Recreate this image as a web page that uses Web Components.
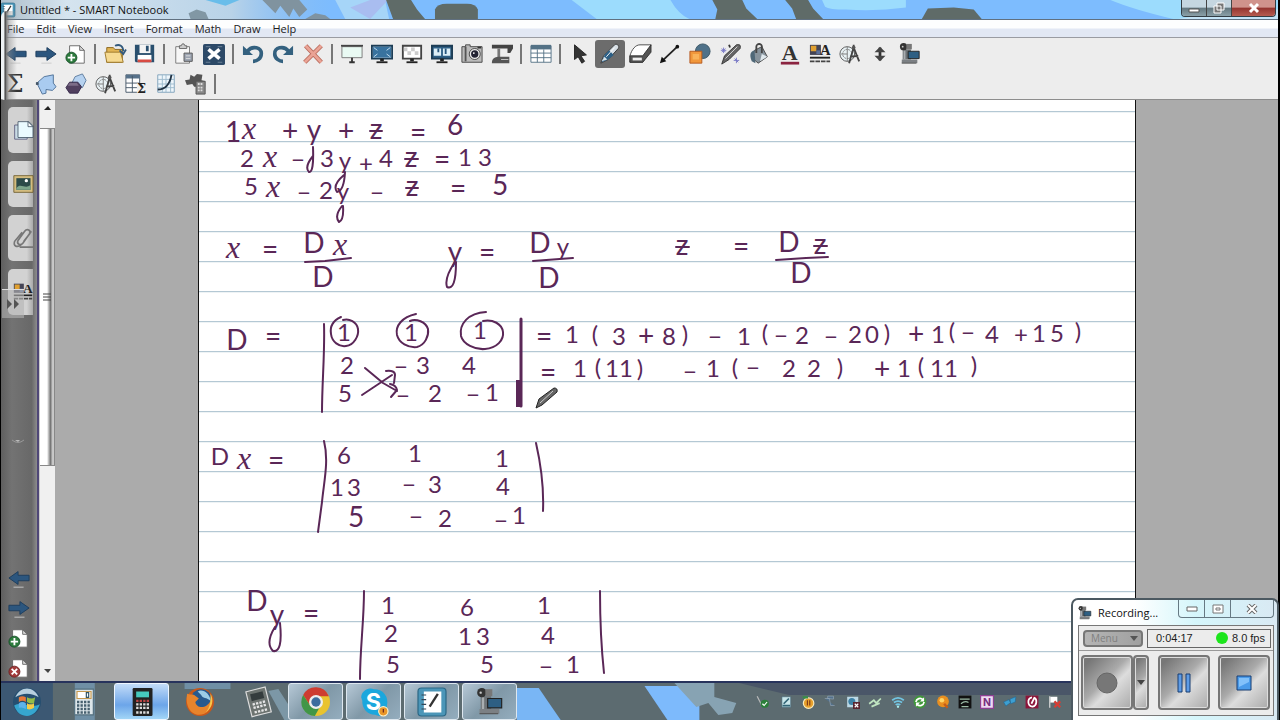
<!DOCTYPE html>
<html lang="en">
<head>
<meta charset="utf-8">
<title>Untitled * - SMART Notebook</title>
<style>
    html, body {
        margin: 0;
        height: 100%;
        overflow: hidden;
        background: #000;
        font-family: "Open Sans", "Noto Sans", sans-serif;
        font-size: 11px;
        color: #1c1c1c;
    }
</style>
</head>
<body>
<notebook-app></notebook-app>

<script>
// every icon is drawn on a 24 x 24 grid
const SHEET = '<path d="M5 3h11l5 5v14H5z" fill="#fff" stroke="#666"/><path d="M16 3v5h5z" fill="#ddd" stroke="#666"/>';
const MONITOR = '<path d="M10 17h4v3h-4z" fill="#222"/><path d="M6 21h12" stroke="#222" stroke-width="2"/>';
const RECORDER = '<path d="M4 7h9v11H4z" fill="#6d7276"/><path d="M6 8v10" stroke="#a9adb0" stroke-width="2"/><path d="M3 18h17v4H3z" fill="#7c8084"/><path d="M3 22h16" stroke="#555"/><circle cx="5" cy="4" r="4" fill="#333"/><circle cx="4" cy="4" r="1" fill="#ccc"/><path d="M8 1h6v6H8z" fill="#777"/><path d="M10 9h12v8H10z" fill="#2e5f83" stroke="#222"/>';
const COMPASS = '<circle cx="9" cy="12" r="8" fill="#e9f2f5" stroke="#555"/><circle cx="9" cy="12" r="5" fill="none" stroke="#777" stroke-dasharray="2 1"/><path d="M9 4v16M9 12H2" stroke="#777"/><path d="M16 2v3M16 5l-5 17M16 5l6 15M12 15l9-1" fill="none" stroke="#444" stroke-width="2"/><circle cx="16" cy="5" r="2" fill="#555"/>';
const GALLERY = '<path d="M1 2h12v11H1z" fill="#445"/><path d="M2 3h6v6H2z" fill="#e0a030"/><path d="M8 8h4v4H8z" fill="#5b6f9a"/><text x="12" y="13" font-family="Liberation Serif" font-weight="bold" font-size="16" fill="#222">A</text><path d="M1 16h22" stroke="#222" stroke-width="2"/><path d="M1 20h22" stroke="#444" stroke-width="2" stroke-dasharray="5 1"/>';
const CALC = '<path d="M4 1h16v22H4z" fill="#dde6ea" stroke="#54707f"/><path d="M6 3h12v6H6z" fill="#fff" stroke="#c79a50"/><path d="M14 4h2v4h-2z" fill="none" stroke="#356"/><path d="M6 12h12M6 15h12M6 18h12M6 21h12" stroke="#47606f" stroke-width="2" stroke-dasharray="2 1"/>';

const ICONS = {
    back: '<path d="M23 9H11V5L1 12l10 7v-4h12z" fill="#2c567e" stroke="#1c3c5c"/><path d="M6 22h11" stroke="#ccc"/>',
    forward: '<path d="M1 9h12V5l10 7-10 7v-4H1z" fill="#2c567e" stroke="#1c3c5c"/><path d="M7 22h11" stroke="#ccc"/>',
    addPage: SHEET + '<circle cx="7" cy="16" r="6" fill="#2c7a3c" stroke="#17502a"/><path d="M7 12v8M3 16h8" stroke="#fff" stroke-width="2"/>',
    removePage: SHEET + '<circle cx="7" cy="16" r="6" fill="#a33b3b" stroke="#6c2020"/><path d="M4 13l6 6M10 13l-6 6" stroke="#fff" stroke-width="2"/>',
    open: '<path d="M3 5h7l2 2h8v14H3z" fill="#e2b553" stroke="#886318"/><path d="M1 10h17l3 11H3z" fill="#f6da91" stroke="#9c782b"/><path d="M12 3c5-2 9 0 9 6M17 8l4 4 3-5" fill="none" stroke="#335a7d" stroke-width="2"/>',
    save: '<path d="M1 2h21v19H2l-1-1z" fill="#294f6e"/><path d="M6 2h12v9H6z" fill="#f4f4f4"/><path d="M13 3h3v6h-3z" fill="#294f6e"/><path d="M4 13h15v7H4z" fill="#fff"/><path d="M4 18h15v3H4z" fill="#d84b43"/>',
    paste: '<path d="M3 4h15v18H3z" fill="#f7f7f7" stroke="#777"/><path d="M7 6V3h2l1-2h2l1 2h2v3z" fill="#ccc" stroke="#666"/><path d="M12 11h9v9h-9z" fill="#9ba3b0" stroke="#555"/><path d="M14 14h5M14 17h5" stroke="#ddd"/>',
    capture: '<rect x="0" y="1" width="24" height="23" rx="2" fill="#2d4a68"/><path d="M6 7l12 10M18 7L6 17" stroke="#fff" stroke-width="4"/><path d="M3 4h5M16 4h5M3 21h5M16 21h5" stroke="#71879b"/>',
    undo: '<path d="M6 9c5-7 16-4 15 3 0 5-5 8-9 8" fill="none" stroke="#34617f" stroke-width="4"/><path d="M1 3v10h11z" fill="#34617f"/>',
    redo: '<path d="M18 9C13 2 2 5 3 12c0 5 5 8 9 8" fill="none" stroke="#34617f" stroke-width="4"/><path d="M23 3v10H12z" fill="#34617f"/>',
    remove: '<path d="M4 3l17 18M21 3L3 21" stroke="#b96b5c" stroke-width="5"/><path d="M4 3l17 18M21 3L3 21" stroke="#eaa395" stroke-width="3"/>',
    shade: '<path d="M1 4h22v12H1z" fill="#e9faf3" stroke="#777"/><path d="M0 3h24" stroke="#444" stroke-width="2"/><path d="M12 16v5M9 21h6" stroke="#333" stroke-width="2"/>',
    fullScreen: '<path d="M1 3h22v14H1z" fill="#fff" stroke="#1d3d55" stroke-width="2"/><path d="M2 4h20v12H2z" fill="#39739f"/><path d="M3 5l4 3M21 5l-4 3M3 15l4-3M21 15l-4-3" stroke="#cde5f5"/>' + MONITOR,
    transparent: '<path d="M2 3h20v14H2z" fill="#fff" stroke="#444" stroke-width="2"/><path d="M3 5h4v4h4V5h4v4h4v4h-4v-4h-4v4H7V9H3z" fill="#ccc"/>' + MONITOR,
    dual: '<path d="M1 3h22v14H1z" fill="#2d5e84" stroke="#1d3d55" stroke-width="2"/><path d="M3 6h8v8H3zM13 6h8v8h-8z" fill="#dceff8"/><path d="M8 6v4M16 6v6" stroke="#25557c" stroke-width="2"/>' + MONITOR,
    camera: '<path d="M1 4h4V2h5v2h13v17H1z" fill="#bbb" stroke="#444"/><path d="M5 4v16" stroke="#555" stroke-width="2"/><circle cx="15" cy="12" r="6" fill="#eee" stroke="#444"/><circle cx="15" cy="12" r="4" fill="#223"/><circle cx="14" cy="11" r="1" fill="#fff"/><path d="M18 5h4" stroke="#333" stroke-width="2"/>',
    docCamera: '<path d="M1 2h23v4l-3 5h-3V6H1z" fill="#444"/><path d="M7 6h3v11H7z" fill="#777"/><path d="M1 21c0-5 5-6 8-6h11v7H1z" fill="#555"/><path d="M11 18h8" stroke="#ccc"/>',
    table: '<path d="M1 3h22v18H1z" fill="#fff" stroke="#547286"/><path d="M1 2h22v5H1z" fill="#547286"/><path d="M1 11h22M1 16h22M8 7v14M15 7v14" stroke="#547286"/>',
    select: '<path d="M6 2v16l4-3 4 7 3-2-4-6 6-1z" fill="#333" stroke="#222"/>',
    pen: '<path d="M2 22l3-8L17 2c2-2 6 1 4 4L10 18z" fill="#d7dfe5" stroke="#333"/><path d="M3 21l3-8 5-5 5 5-6 5z" fill="#2c5f85"/><path d="M3 20l3-5 3 3z" fill="#d5e2e8"/><path d="M8 15l9-10" stroke="#fff"/>',
    eraser: '<path d="M1 14C3 7 7 2 12 2h12l-3 9-6 10H1z" fill="#fff" stroke="#444"/><path d="M24 2l-9 12H1v7h14l9-11z" fill="#555" stroke="#333"/><path d="M4 16h10v3H4z" fill="#eee"/>',
    line: '<path d="M3 20L20 4" stroke="#222" stroke-width="2"/><circle cx="20" cy="4" r="2" fill="#111"/><path d="M1 22l2-7 5 5z" fill="#111"/>',
    shapes: '<circle cx="15" cy="9" r="8" fill="#4e7189" stroke="#395565"/><path d="M1 9h13v13H1z" fill="#f1973b" stroke="#b3561d"/><path d="M4 12h7v6H4z" fill="#f9b25a"/>',
    magicPen: '<path d="M3 23l3-9L19 2c4-1 5 1 4 4L11 18z" fill="#666" stroke="#333"/><path d="M7 17L20 4" stroke="#ddd"/><path d="M5 5v6M2 8h6M3 6l4 4M7 6l-4 4M19 16v6M16 19h6M17 17l4 4" stroke="#7575c5"/><path d="M11 2l1 3" stroke="#333" stroke-width="2"/>',
    fill: '<path d="M6 8l8-4 6 11-10 7-7-6z" fill="#87939c" stroke="#444"/><path d="M8 11V4c0-4 7-4 6 1v6" fill="none" stroke="#444" stroke-width="2"/><path d="M6 8c-6 2-5 7-3 12l4 2z" fill="#4f6878"/><path d="M14 12l6 3-8 5z" fill="#dfe8ed"/>',
    text: '<text x="3" y="18" font-family="Liberation Serif" font-weight="bold" font-size="24" fill="#333">A</text><path d="M2 22h20" stroke="#8b2440" stroke-width="3"/>',
    gallery: GALLERY,
    compass: COMPASS,
    move: '<path d="M12 5v14" stroke="#333" stroke-width="3"/><path d="M6 10l6-6 6 6zM6 14l6 6 6-6z" fill="#444"/>',
    recorder: RECORDER,
    sum: '<text x="2" y="21" font-family="DejaVu Serif" font-size="26" fill="#333">Σ</text>',
    polygon: '<path d="M2 11l8-7 10-2v9l3 4-4 4-7-1v4l-4 1z" fill="#a9cbf0" stroke="#4c6f96"/><path d="M1 10h3v3H1z" fill="#456"/>',
    hexagon: '<path d="M11 4l8-3 4 7-4 8h-8l-3-6z" fill="#b6d2f0" stroke="#5b7a9c"/><path d="M5 10h9l4 5-4 7H5l-4-6z" fill="#51405f" stroke="#35294a"/><path d="M5 11h8l2 3H3z" fill="#7d6d88"/>',
    tableSum: '<path d="M1 2h15v19H1z" fill="#fff" stroke="#456"/><path d="M1 2h15v4H1z" fill="#56718a"/><path d="M1 11h15M1 16h15M8 3v18" stroke="#456"/><path d="M13 11h11v12H13z" fill="#eee"/><text x="13" y="22" font-family="DejaVu Serif" font-weight="bold" font-size="14" fill="#222">Σ</text>',
    graph: '<path d="M3 2h18v19H3z" fill="#eef6fb" stroke="#7ea1ba"/><path d="M8 2v19M12 2v19M17 2v19M3 7h18M3 12h18M3 16h18" stroke="#9dbacd"/><path d="M3 18c8 0 13-5 15-16" fill="none" stroke="#234" stroke-width="2"/>',
    puzzle: '<path d="M0 8l5-1 1-5 4 2 3-3 6 1-1 6 4 1v6H10l-2-3-6 1z" fill="#555"/><path d="M12 9h10v14H12z" fill="#888" stroke="#555"/><path d="M14 12h6M14 16h6M14 19h6" stroke="#ddd" stroke-width="2" stroke-dasharray="2 1"/>',
    pages: '<path d="M2 6h15v17H2z" fill="#c9dbe5" stroke="#557"/><path d="M6 2h13l5 5v14H6z" fill="#eafaff" stroke="#456"/><path d="M18 2v6h6z" fill="#fff" stroke="#456"/>',
    picture: '<path d="M1 2h23v20H1z" fill="#d4bd80" stroke="#6c5a2a"/><path d="M4 5h17v14H4z" fill="#2c4a49"/><path d="M4 17c5-7 11 2 17-4v6H4z" fill="#7da58b"/><circle cx="16" cy="8" r="2" fill="#fff"/>',
    clip: '<path d="M22 4L12 18c-3 4-8 1-6-3l8-11c3-4 8-1 6 3l-7 9M11 5L2 16c-2 6 3 8 8 4M8 23h16" fill="none" stroke="#777" stroke-width="2"/>',
    orb: '<circle cx="12" cy="12" r="12" fill="#264f70"/><path d="M1 15c7-4 14 3 22-1-2 6-6 10-11 10S3 21 1 15z" fill="#36a6cf"/><path d="M2 8C6-2 18-2 22 8 16 4 8 4 2 8z" fill="#b8d0df"/><path d="M5 8q3-2 6 0v4q-3-2-6 0z" fill="#e97838"/><path d="M12 8q4 2 7 0l-1 5q-3 1-6-1z" fill="#94bd48"/><path d="M5 13q3-2 6 0v5q-3-2-6-1z" fill="#5eb3ea"/><path d="M12 13q3 2 6 0v4q-3 2-6 1z" fill="#f5cd47"/>',
    calc: CALC,
    calcDark: '<rect x="4" y="0" width="17" height="24" rx="1" fill="#222"/><path d="M7 3h11v5H7z" fill="#46c9bd"/><path d="M7 11h12" stroke="#b44" stroke-width="2" stroke-dasharray="2 1"/><path d="M7 14h12M7 17h12M7 21h12" stroke="#ddd" stroke-width="2" stroke-dasharray="2 1"/>',
    calcTilt: '<g transform="rotate(-14 12 12)"><path d="M4 1h17v22H4z" fill="#6c7370" stroke="#ddd"/><path d="M7 4h11v6H7z" fill="#343c3d"/><path d="M7 13h12M7 16h12M7 20h12" stroke="#e5e5e5" stroke-width="2" stroke-dasharray="2 1"/></g>',
    firefox: '<circle cx="12" cy="12" r="12" fill="#c9581a"/><circle cx="13" cy="10" r="9" fill="#28598e"/><path d="M10 3c4-3 11 2 11 8-3-3-7-2-8-5z" fill="#9ccbe6"/><path d="M1 5c2 1 4 0 6 1l4 3-3 3c1 6 10 6 13-1 1 7-3 12-10 12S-1 15 1 5z" fill="#e8842c"/><path d="M21 5c3 5 2 12-4 16 4-5 4-9 4-16z" fill="#f8c64a"/>',
    chrome: '<circle cx="12" cy="12" r="12" fill="#e9c32f"/><path d="M1 6a12 12 0 0 1 22 1H12l-5 8z" fill="#ce3c31"/><path d="M1 6a12 12 0 0 0 10 18l5-9-9 0z" fill="#419647"/><circle cx="12" cy="12" r="6" fill="#eee"/><circle cx="12" cy="12" r="4" fill="#3c6c9e"/>',
    skype: '<path d="M1 8a8 8 0 0 1 11-7 11 11 0 0 1 11 14 7 7 0 0 1-10 8A11 11 0 0 1 2 11z" fill="#1ba7dd"/><text x="5" y="19" font-family="Inter" font-weight="bold" font-size="20" fill="#fff">S</text><circle cx="20" cy="20" r="4" fill="#e99628" stroke="#fff3c9"/><path d="M20 18v3" stroke="#622"/>',
    notebook: '<rect x="0" y="0" width="24" height="24" rx="3" fill="#4b96b8" stroke="#2a6684"/><path d="M5 3h15v18H5z" fill="#fff"/><path d="M3 6h4M3 10h4M3 14h4M3 18h4" stroke="#345"/><path d="M10 16l7-11" stroke="#333" stroke-width="2"/>',
    trayCheck: '<path d="M2 2l8 16" stroke="#bbb" stroke-width="2"/><circle cx="15" cy="15" r="7" fill="#2b7f39"/><path d="M11 15l3 3 5-6" fill="none" stroke="#fff" stroke-width="2"/>',
    trayNote: '<path d="M5 3h15v18H5z" fill="#c9e6ea" stroke="#467"/><path d="M8 15l9-9M6 18h13" stroke="#367" stroke-width="3"/>',
    trayWarn: '<circle cx="13" cy="14" r="9" fill="#e8a12b" stroke="#faecc0" stroke-width="2"/><path d="M11 9v9M15 9v9" stroke="#823a15" stroke-width="2"/><path d="M3 4h9" stroke="#399046" stroke-width="4"/>',
    traySync: '<path d="M3 6h8l2 12h7M8 6V2h10v5z" fill="#54728c" stroke="#9ab"/>',
    trayError: '<path d="M2 3h19v18H2z" fill="#bcd9e6"/><circle cx="10" cy="11" r="6" fill="#3e82a6"/><path d="M12 12h12v12H12z" fill="#5b2630"/><path d="M15 15l6 6M21 15l-6 6" stroke="#fff" stroke-width="2"/>',
    trayPen: '<path d="M2 15l8-6 4 5 8-8M6 20l14-6" fill="none" stroke="#bfe4c0" stroke-width="3"/>',
    trayWifi: '<path d="M2 9q10-8 20 0M5 13q7-5 14 0M8 17q4-3 8 0" fill="none" stroke="#72c4e2" stroke-width="3"/><circle cx="12" cy="20" r="2" fill="#aee"/>',
    trayRefresh: '<circle cx="12" cy="12" r="11" fill="#40983a"/><path d="M5 12a7 7 0 0 1 12-4M19 12a7 7 0 0 1-12 4" fill="none" stroke="#fff" stroke-width="3"/><path d="M19 4v7h-7zM5 20v-7h7z" fill="#fff"/>',
    trayGold: '<circle cx="12" cy="11" r="10" fill="#e88f20"/><circle cx="10" cy="9" r="4" fill="#ffd565"/><path d="M14 15l6 7" stroke="#c75c16" stroke-width="4"/>',
    trayDark: '<path d="M1 1h22v22H1z" fill="#111"/><path d="M3 7h17M5 15q7-6 13-2M6 20h12" fill="none" stroke="#9cbba6" stroke-width="2"/>',
    trayOneNote: '<path d="M1 1h22v22H1z" fill="#efdaf2" stroke="#8e4094" stroke-width="2"/><text x="5" y="18" font-family="Inter" font-weight="bold" font-size="18" fill="#78307f">N</text>',
    trayCubes: '<path d="M1 12l9-4 3 5-8 6zM12 7l10-4-1 9-8 3z" fill="#3d9fd1" stroke="#216894"/>',
    trayRed: '<path d="M1 1h22v22H1z" fill="#8c153a"/><path d="M12 4c-9 2-8 15 1 16 8-2 8-13 3-15l-5 10" fill="none" stroke="#fff" stroke-width="3"/>',
    trayFlag: '<path d="M3 2v20" stroke="#ddd" stroke-width="2"/><path d="M4 3h12v10H4z" fill="#fff"/><path d="M11 11l10 10M21 11L11 21" stroke="#d63e35" stroke-width="4"/>'
};

class NbIcon extends HTMLElement {
    constructor() {
        super();
        this.attachShadow({ mode: 'open' });
    }

    connectedCallback() {
        this.shadowRoot.innerHTML = `
        <style>
            :host { display: block; width: 24px; height: 24px; flex: none; }
            svg { display: block; width: 100%; height: 100%; overflow: visible; }
        </style>
        <svg viewBox="0 0 24 24" fill="none" aria-hidden="true">${ICONS[this.getAttribute('name')] || ''}</svg>
        `;
    }
}
customElements.define('nb-icon', NbIcon);

class WindowTitle extends HTMLElement {
    constructor() {
        super();
        this.attachShadow({ mode: 'open' });
        this.shadowRoot.innerHTML = `
        <style>
            :host {
                display: flex;
                align-items: center;
                position: relative;
                height: 20px;
                overflow: hidden;
                background: #7dbcfe;
                border-bottom: 1px solid #607080;
                box-sizing: border-box;
            }
            .wallpaper { position: absolute; inset: 0; width: 100%; height: 100%; }
            nb-icon { position: relative; width: 14px; height: 14px; }
            h1 { position: relative; flex: 1; margin: 0 0 0 5px; font-size: 11px; font-weight: normal; line-height: 20px; color: #111; }
            .controls {
                position: relative;
                display: flex;
                align-self: flex-start;
                height: 16px;
                margin-right: 2px;
                border: 1px solid #333d44;
                border-top: 0;
                border-radius: 0 0 4px 4px;
                overflow: hidden;
            }
            button {
                display: flex;
                align-items: center;
                justify-content: center;
                width: 25px;
                padding: 0;
                border: 0;
                border-right: 1px solid #444;
                background: linear-gradient(#c5d6e0 45%, #63777f 50%, #8ba0a8);
            }
            button.close { width: 43px; border: 0; background: linear-gradient(#d0938c 45%, #94342f 50%, #b65c50); }
            button svg { width: 12px; height: 12px; }
        </style>
        <svg class="wallpaper" viewBox="0 0 1280 20" preserveAspectRatio="none" aria-hidden="true">
            <defs><linearGradient id="glass">
                <stop offset="0" stop-color="#aebfcb"/><stop offset=".2" stop-color="#d5e4ef"/>
                <stop offset=".7" stop-color="#b9d3e8"/><stop offset="1" stop-color="#8ebde9" stop-opacity="0"/>
            </linearGradient></defs>
            <path d="M0 0h330v20H0z" fill="url(#glass)"/>
            <path d="M188 14l8-4 9 3 3 7h-18z" fill="#8197a4"/>
            <path d="M205 0l20 6 14-6z" fill="#69bdea"/>
            <path d="M262 0h37l8 10-8 8-6-9-4 9-9-12-5 8z" fill="#80939f"/>
            <path d="M305 20l10-6 10 2 5 4z" fill="#7f93a1"/>
            <path d="M335 0h50l4 20h-44z" fill="#a6d5f8"/>
            <path d="M350 8l20-8h18l-18 20z" fill="#a9bdf0"/>
            <path d="M386 0h25l6 10 8 10h-32z" fill="#5f6b68"/>
            <path d="M435 20v-10q2-6 12-6h20q9 0 11 6v10z" fill="#5f6b68"/>
            <path d="M572 0h99q8 15 19 20H597z" fill="#9cdcfd"/>
            <path d="M713 0h30l4 9 11 11h-42l2-10z" fill="#5f6b68"/>
            <path d="M786 0h23l5 9 10 11h-27l-4-11z" fill="#5f6b68"/>
            <path d="M823 0h84v8q-30 4-60 2-17 0-21-3z" fill="#9cdcfd"/>
            <path d="M923 20l6-11 26-1 20 2 8 10z" fill="#5f6b68"/>
            <path d="M1112 0h168v20h-105q-40-10-63-20z" fill="#9cdcfd"/>
            <path d="M1180 20q50-10 100-10v10z" fill="#c4e4f7"/>
        </svg>
        <nb-icon name="notebook"></nb-icon>
        <h1><slot></slot></h1>
        <div class="controls">
            <button aria-label="Minimize"><svg viewBox="0 0 12 12"><path d="M1 7h10v3H1z" fill="#fff" stroke="#555"/></svg></button>
            <button aria-label="Restore"><svg viewBox="0 0 12 12"><path d="M4 1h7v7H4zM1 4h7v7H1z" fill="#777" stroke="#fff"/></svg></button>
            <button class="close" aria-label="Close"><svg viewBox="0 0 12 12"><path d="M2 2l8 8M10 2l-8 8" stroke="#fff" stroke-width="3"/></svg></button>
        </div>
        `;
    }
}
customElements.define('window-title', WindowTitle);

class MenuBar extends HTMLElement {
    constructor() {
        super();
        this.attachShadow({ mode: 'open' });
        this.shadowRoot.innerHTML = `
        <style>
            :host {
                display: block;
                height: 18px;
                background: linear-gradient(#fdfefe 8px, #e2e8f4 9px);
                border-bottom: 1px solid #9a9ca2;
                box-sizing: border-box;
            }
            nav { display: flex; gap: 12px; padding-left: 6px; }
            button { padding: 0; border: 0; background: none; font: inherit; line-height: 18px; color: #1c1c1c; }
        </style>
        <nav></nav>
        `;
    }

    connectedCallback() {
        const items = this.getAttribute('items').split(',');
        this.shadowRoot.querySelector('nav').innerHTML = items.map((item) => `<button>${item}</button>`).join('');
    }
}
customElements.define('menu-bar', MenuBar);

// tools is a list of icon names, "|" stands for a separator
class ToolRow extends HTMLElement {
    constructor() {
        super();
        this.attachShadow({ mode: 'open' });
        this.shadowRoot.innerHTML = `
        <style>
            :host { display: block; }
            div { display: flex; align-items: center; height: 30px; }
            button { display: flex; align-items: center; justify-content: center; width: 30px; height: 28px; padding: 0; border: 0; border-radius: 3px; background: none; }
            button[aria-pressed=true] { background: #6c6c6c; }
            nb-icon { width: 22px; height: 22px; }
            i { width: 2px; height: 20px; margin: 0 4px 0 3px; background: #777; }
        </style>
        <div role="toolbar"></div>
        `;
    }

    connectedCallback() {
        const active = this.getAttribute('active');
        this.shadowRoot.querySelector('div').innerHTML = this.getAttribute('tools').split(' ').map((tool) => {
            if (tool === '|') {
                return '<i></i>';
            }
            return `<button aria-label="${tool}" aria-pressed="${tool === active}"><nb-icon name="${tool}"></nb-icon></button>`;
        }).join('');
    }
}
customElements.define('tool-row', ToolRow);

class SideTabs extends HTMLElement {
    constructor() {
        super();
        this.attachShadow({ mode: 'open' });
        this.shadowRoot.innerHTML = `
        <style>
            :host {
                display: flex;
                flex-direction: column;
                position: relative;
                width: 38px;
                box-sizing: border-box;
                padding: 7px 0 0 7px;
                background: linear-gradient(90deg, #5f5f5f, #737373 30%, #686868 85%, #8c8c8c);
                border-right: 2px solid #4f4777;
            }
            .tabs { display: grid; gap: 8px; }
            button { display: flex; align-items: center; padding: 0; border: 0; background: none; }
            .tabs button { width: 25px; height: 46px; padding-left: 5px; background: linear-gradient(90deg, #d2d2d2 75%, #aaa); border-radius: 5px 0 0 5px; }
            .tabs nb-icon { width: 20px; height: 20px; }
            .grip { display: block; width: 14px; height: 5px; margin: 124px 0 auto 3px; }
            .pager { display: grid; gap: 8px; padding-bottom: 2px; }
            .pager nb-icon { width: 22px; height: 22px; }
            .expand {
                position: absolute;
                left: 1px;
                top: 189px;
                width: 22px;
                height: 29px;
                padding-left: 4px;
                border-top: 1px solid #ddd;
                background: rgba(180, 180, 180, .6);
            }
        </style>
        <div class="tabs">
            <button aria-label="Page Sorter"><nb-icon name="pages"></nb-icon></button>
            <button aria-label="Gallery"><nb-icon name="picture"></nb-icon></button>
            <button aria-label="Attachments"><nb-icon name="clip"></nb-icon></button>
            <button aria-label="Properties"><nb-icon name="gallery"></nb-icon></button>
        </div>
        <button class="expand" aria-label="Expand"><svg width="14" height="12"><path d="M1 1l5 5-5 5zM8 1l5 5-5 5z" fill="#555"/></svg></button>
        <svg class="grip" viewBox="0 0 14 5"><path d="M1 1q6 5 12 0" fill="none" stroke="#999"/><path d="M4 1h5L7 3z" fill="#bbb"/></svg>
        <div class="pager">
            <button aria-label="Previous page"><nb-icon name="back"></nb-icon></button>
            <button aria-label="Next page"><nb-icon name="forward"></nb-icon></button>
            <button aria-label="Add page"><nb-icon name="addPage"></nb-icon></button>
            <button aria-label="Delete page"><nb-icon name="removePage"></nb-icon></button>
        </div>
        `;
    }
}
customElements.define('side-tabs', SideTabs);

class PageScroll extends HTMLElement {
    constructor() {
        super();
        this.attachShadow({ mode: 'open' });
        this.shadowRoot.innerHTML = `
        <style>
            :host { display: flex; flex-direction: column; width: 16px; background: #f0f0f0; border-left: 1px solid #ccc; box-sizing: border-box; }
            .cap { height: 28px; flex: none; display: flex; justify-content: center; padding-top: 6px; box-sizing: border-box; }
            .cap.end { height: 16px; padding-top: 4px; }
            .track { flex: 1; }
            .thumb {
                display: flex;
                align-items: center;
                height: 63%;
                box-sizing: border-box;
                padding-left: 3px;
                border: 1px solid #888;
                border-left: 0;
                background: linear-gradient(90deg, #fff 50%, #aaa 65%, #777 75%, #c9c9c9 90%);
            }
        </style>
        <div class="cap"><svg width="7" height="5"><path d="M0 4h7L4 0z" fill="#222"/></svg></div>
        <div class="track"><div class="thumb"><svg width="8" height="8"><path d="M0 1h8M0 4h8M0 7h8" stroke="#444"/></svg></div></div>
        <div class="cap end"><svg width="7" height="5"><path d="M0 0h7L4 4z" fill="#444"/></svg></div>
        `;
    }
}
customElements.define('page-scroll', PageScroll);

// Each line of ink is a list of [text, centre x, baseline y, style].
// Styles: v = italic variable, w = the larger letters.
const INK = [
    [['1', 34, 42, 'w'], ['x', 50, 39, 'v'], ['+', 91, 41, 'w'], ['y', 115, 40, 'w'], ['+', 147, 41, 'w'], ['z', 177, 39, 'w'], ['=', 219, 42, 'w'], ['6', 256, 35, 'w']],
    [['2', 48, 67], ['x', 71, 67, 'v'], ['−', 99, 68], ['3', 128, 67], ['y', 146, 69], ['+', 167, 72], ['4', 187, 67], ['z', 212, 67, 'w'], ['=', 243, 69, 'w'], ['1', 266, 66], ['3', 286, 66]],
    [['5', 52, 95], ['x', 74, 97, 'v'], ['−', 105, 101], ['2', 127, 99], ['y', 144, 100], ['−', 178, 101], ['z', 213, 96, 'w'], ['=', 259, 98, 'w'], ['5', 301, 95, 'w']],
    [['x', 34, 158, 'v'], ['=', 71, 159, 'w'], ['D', 115, 153, 'w'], ['x', 141, 155, 'v']],
    [['D', 124, 187, 'w']],
    [['y', 256, 162, 'w'], ['=', 288, 162, 'w'], ['D', 341, 153, 'w'], ['y', 364, 155]],
    [['D', 350, 188, 'w']],
    [['z', 483, 155, 'w'], ['=', 542, 156, 'w'], ['D', 590, 152, 'w'], ['z', 621, 154, 'w']],
    [['D', 602, 183, 'w']],
    [['D', 38, 250, 'w'], ['=', 74, 246, 'w']],
    [['1', 145, 241], ['1', 212, 241], ['1', 281, 239]],
    [['2', 148, 274], ['−', 202, 275], ['3', 224, 274], ['4', 270, 274]],
    [['5', 146, 302], ['−', 204, 304], ['2', 236, 302], ['−', 274, 303], ['1', 293, 301]],
    [['=', 345, 246, 'w'], ['1', 373, 243], ['(', 396, 243], ['3', 420, 245], ['+', 447, 246, 'w'], ['8', 470, 245], [')', 486, 243], ['−', 516, 245], ['1', 545, 245], ['(', 566, 242], ['−', 582, 244], ['2', 603, 244], ['−', 632, 245], ['2', 656, 243], ['0', 673, 243], [')', 688, 242], ['+', 717, 244, 'w'], ['1', 739, 243], ['(', 753, 240], ['−', 769, 241], ['4', 793, 243], ['+', 822, 243], ['1', 840, 242], ['5', 858, 242], [')', 879, 240]],
    [['=', 349, 282, 'w'], ['1', 381, 277], ['(', 399, 276], ['1', 413, 277], ['1', 427, 277], [')', 441, 277], ['−', 491, 280], ['1', 514, 277], ['(', 536, 276], ['−', 554, 276], ['2', 590, 277], ['2', 615, 277], [')', 641, 276], ['+', 683, 279, 'w'], ['1', 705, 277], ['(', 722, 275], ['1', 738, 277], ['1', 752, 277], [')', 775, 274]],
    [['D', 21, 365], ['x', 45, 369, 'v'], ['=', 77, 370, 'w']],
    [['6', 145, 364], ['1', 216, 362], ['1', 303, 367]],
    [['1', 138, 396], ['3', 155, 396], ['−', 210, 393], ['3', 236, 393], ['4', 304, 395]],
    [['5', 157, 427, 'w'], ['−', 217, 425], ['2', 246, 427], ['−', 302, 429], ['1', 320, 424]],
    [['D', 58, 511, 'w'], ['y', 78, 525, 'w'], ['=', 112, 523, 'w']],
    [['1', 189, 514], ['6', 268, 516], ['1', 345, 514]],
    [['2', 192, 542], ['1', 266, 545], ['3', 284, 545], ['4', 349, 544]],
    [['5', 194, 573], ['5', 288, 573], ['−', 347, 575], ['1', 374, 573]]
];

class NotePage extends HTMLElement {
    constructor() {
        super();
        this.attachShadow({ mode: 'open' });
        const ink = INK.map((line) => '<text>' + line.map(([text, x, y, style]) =>
            `<tspan x="${x}" y="${y}" class="${style || 'n'}">${text}</tspan>`).join('') + '</text>').join('');
        this.shadowRoot.innerHTML = `
        <style>
            :host {
                display: block;
                box-sizing: border-box;
                overflow: hidden;
                border: solid #111;
                border-width: 0 1px;
                background: #fff repeating-linear-gradient(transparent 0 11px, #b4c8d4 11px 12px, #eef3f5 12px 13px, transparent 13px 30px);
            }
            svg { display: block; width: 100%; height: 100%; }
            text { font-family: Lato, "Open Sans", sans-serif; fill: #5a2757; text-anchor: middle; }
            .n { font-size: 24px; }
            .w { font-size: 28px; }
            .v { font-size: 32px; font-family: "Liberation Serif", serif; font-style: italic; }
            .strokes { fill: none; stroke: #5a2757; stroke-width: 2; stroke-linecap: round; stroke-linejoin: round; }
            .thick { stroke-width: 3; }
            .blot { stroke-width: 6; stroke-linecap: butt; }
        </style>
        <svg>
            ${ink}
            <g class="strokes">
                <path d="M106 162l20-1 26-3M334 161l40-3M577 160l30-2 22-1"/>
                <path d="M171 31h12M206 59h13M207 88h12M477 147h13M615 146h13"/>
                <path d="M114 47q1 26-4 25-5-5 4-16M145 75q-12 10-7 17 7-1 8-20M143 106q-8 10-3 16 5-2 4-16M256 162q-11 16-8 25 9 4 9-25M76 527q-10 16-2 24 10 2 7-28"/>
                <path d="M125 224c1 28-2 58-2 88M125 341c5 20 0 40-2 61l-4 30M337 343c5 22 8 44 7 68M165 491c0 30-4 58-4 88M401 491c0 28 1 54 4 82"/>
                <path d="M142 217c-9 4-11 11-10 17 1 8 8 13 15 12 8-1 13-10 12-17-1-7-9-11-15-9"/>
                <path d="M217 214c-14 3-21 12-19 21 2 8 11 13 20 12 8-2 12-11 11-18-2-7-12-11-18-8"/>
                <path d="M287 212c-18 1-27 12-25 24 2 8 14 14 24 13 12-1 19-9 18-17-1-8-10-13-20-11"/>
                <path d="M166 268l18 15 14 8M163 295l30-20M187 271q9-1 9 4l-1 8M191 284q6 1 7 6l-6 7"/>
                <path class="thick" d="M322 219v87"/>
                <path class="blot" d="M320 280v27"/>
            </g>
            <path d="M337 308l3-9 15-11q4 0 3 4l-15 13z" fill="#666" stroke="#222"/>
            <path d="M341 303l13-12" stroke="#ccc"/>
        </svg>
        `;
    }
}
customElements.define('note-page', NotePage);

class TaskBar extends HTMLElement {
    constructor() {
        super();
        this.attachShadow({ mode: 'open' });
        const tray = ['trayCheck', 'trayNote', 'trayWarn', 'traySync', 'trayError', 'trayPen', 'trayWifi', 'trayRefresh', 'trayGold', 'trayDark', 'trayOneNote', 'trayCubes', 'trayRed', 'trayFlag'];
        this.shadowRoot.innerHTML = `
        <style>
            :host {
                display: flex;
                justify-content: space-between;
                position: relative;
                height: 39px;
                box-sizing: border-box;
                border-top: 2px solid #27335c;
                background: #5c6b70;
            }
            .wallpaper { position: absolute; inset: 0; width: 100%; height: 100%; }
            .apps { position: relative; display: flex; gap: 3px; }
            button { display: flex; align-items: center; justify-content: center; width: 55px; height: 37px; padding: 0; border: 1px solid transparent; border-radius: 3px; background: none; }
            .start { width: 52px; }
            .start nb-icon { width: 32px; height: 32px; }
            .open { border-color: #dde7ef; background: linear-gradient(135deg, #b6c8d6, #8098a7 50%, #94adbe); }
            .active { border-color: #eef6ff; background: linear-gradient(#c3dcf8, #6ca5e9 60%, #a2d5f6); }
            .apps nb-icon { width: 28px; height: 28px; }
            .tray { position: relative; display: flex; align-items: center; justify-content: space-around; width: 314px; margin-right: 212px; }
            .tray nb-icon { width: 14px; height: 14px; }
        </style>
        <svg class="wallpaper" viewBox="0 0 1280 37" preserveAspectRatio="none" aria-hidden="true">
            <path d="M0 0h52v37H0z" fill="#3c5873"/>
            <path d="M74 0h20v37H74zM184 0h46v6h-46z" fill="#6f8fa5"/>
            <path d="M268 8l10-2 20 31h-14z" fill="#7c97a6"/>
            <path d="M517 5h22l22 32h-44z" fill="#79b6f5"/>
            <path d="M645 3h40l15 12v22h-32z" fill="#7dbafc"/>
            <path d="M675 0h40v14l22 6-4 10-14 2-10-12-12 4z" fill="#87a3b3"/>
            <path d="M740 0h340v12H790z" fill="#4a5668"/>
        </svg>
        <div class="apps">
            <button class="start" aria-label="Start"><nb-icon name="orb"></nb-icon></button>
            <button aria-label="Calculator"><nb-icon name="calc"></nb-icon></button>
            <button class="active" aria-label="Scientific calculator"><nb-icon name="calcDark"></nb-icon></button>
            <button aria-label="Firefox"><nb-icon name="firefox"></nb-icon></button>
            <button aria-label="Graphing calculator"><nb-icon name="calcTilt"></nb-icon></button>
            <button class="open" aria-label="Chrome"><nb-icon name="chrome"></nb-icon></button>
            <button class="open" aria-label="Skype"><nb-icon name="skype"></nb-icon></button>
            <button class="open" aria-label="Notebook"><nb-icon name="notebook"></nb-icon></button>
            <button class="open" aria-label="Recorder"><nb-icon name="recorder"></nb-icon></button>
        </div>
        <div class="tray">${tray.map((name) => `<nb-icon name="${name}"></nb-icon>`).join('')}</div>
        `;
    }
}
customElements.define('task-bar', TaskBar);

class RecorderPanel extends HTMLElement {
    constructor() {
        super();

        this.state = {
            time: '0:04:17',
            rate: '8.0 fps'
        };

        this.attachShadow({ mode: 'open' });
        this.shadowRoot.innerHTML = `
        <style>
            :host {
                display: block;
                width: 208px;
                height: 122px;
                box-sizing: border-box;
                padding: 0 3px 4px 5px;
                border: 2px solid #4c5961;
                border-bottom: 0;
                border-radius: 7px 7px 0 0;
                background: linear-gradient(90deg, #fff 30%, #d5f6fb 60%, #d9e9f3);
            }
            header { display: flex; align-items: center; height: 25px; gap: 6px; }
            header nb-icon { width: 14px; height: 14px; }
            h2 { flex: 1; margin: 0; font-size: 11px; font-weight: normal; color: #111; }
            .controls { display: flex; align-self: flex-start; height: 17px; border: 1px solid #667983; border-top: 0; border-radius: 0 0 4px 4px; }
            .controls button { display: flex; align-items: center; justify-content: center; width: 26px; padding: 0; border: 0; border-right: 1px solid #667983; background: none; }
            .controls button:last-child { width: 42px; border: 0; }
            .panel { border: 1px solid #777; background: #ececec; }
            .status { display: flex; align-items: center; gap: 4px; height: 24px; padding: 0 2px 0 4px; border-bottom: 1px solid #999; }
            select {
                appearance: none;
                width: 60px;
                height: 17px;
                padding: 0 6px;
                border: 2px solid #777;
                border-radius: 4px;
                background: linear-gradient(90deg, #b5b5b5, #a0a0a0);
                font: inherit;
                font-size: 10px;
                line-height: 13px;
                color: #808080;
            }
            label { position: relative; display: block; height: 17px; }
            label svg { position: absolute; right: 5px; top: 6px; }
            .readout { flex: 1; display: flex; align-items: center; height: 17px; padding: 0 5px 0 8px; border: 1px solid #666; font-family: "Liberation Sans", sans-serif; }
            .dot { width: 12px; height: 12px; margin: 0 4px 0 auto; border-radius: 50%; background: #1ce51c; }
            .buttons { display: flex; justify-content: space-between; height: 55px; padding: 4px 3px 5px 2px; }
            .buttons button { display: flex; align-items: center; justify-content: center; width: 52px; padding: 0; border: 2px solid #777; border-radius: 4px; background: linear-gradient(135deg, #777 10%, #aaa 45%, #ddd 60%, #aaa); box-shadow: inset 0 0 0 1px #ddd; }
            .split { display: flex; }
            .buttons .more { width: 16px; }
        </style>
        <header>
            <nb-icon name="recorder"></nb-icon>
            <h2>Recording...</h2>
            <div class="controls">
                <button aria-label="Minimize"><svg width="12" height="6"><path d="M1 1h10v4H1z" fill="#fff" stroke="#666"/></svg></button>
                <button aria-label="Maximize"><svg width="12" height="10"><path d="M1 1h10v8H1zM4 4h4v2H4z" fill="#fff" stroke="#777"/></svg></button>
                <button aria-label="Close"><svg width="12" height="10"><path d="M2 1l8 8M10 1L2 9" stroke="#666" stroke-width="4"/><path d="M2 1l8 8M10 1L2 9" stroke="#fff" stroke-width="2"/></svg></button>
            </div>
        </header>
        <div class="panel">
            <div class="status">
                <label>
                    <select aria-label="Menu"><option>Menu</option></select>
                    <svg width="8" height="5"><path d="M0 0h8L4 5z" fill="#555"/></svg>
                </label>
                <div class="readout"><span id="time"></span><span class="dot"></span><span id="rate"></span></div>
            </div>
            <div class="buttons">
                <div class="split">
                    <button aria-label="Record"><svg width="22" height="22"><circle cx="11" cy="11" r="10" fill="#777" stroke="#666"/></svg></button>
                    <button class="more" aria-label="Record options"><svg width="8" height="5"><path d="M0 0h8L4 5z" fill="#444"/></svg></button>
                </div>
                <button aria-label="Pause"><svg width="14" height="20"><path d="M1 1h4v18H1zM9 1h4v18H9z" fill="#5d9be5" stroke="#173c72"/></svg></button>
                <button aria-label="Stop"><svg width="16" height="16"><path d="M1 1h14v14H1z" fill="#4a9bea" stroke="#173c72"/><path d="M3 3h10v4L3 12z" fill="#82c1fa"/></svg></button>
            </div>
        </div>
        `;
    }

    connectedCallback() {
        this.shadowRoot.querySelector('#time').textContent = this.state.time;
        this.shadowRoot.querySelector('#rate').textContent = this.state.rate;
    }
}
customElements.define('recorder-panel', RecorderPanel);

class NotebookApp extends HTMLElement {
    constructor() {
        super();
        this.attachShadow({ mode: 'open' });
        this.shadowRoot.innerHTML = `
        <style>
            :host {
                display: flex;
                flex-direction: column;
                position: relative;
                height: 100vh;
                box-sizing: border-box;
                border: solid #000;
                border-width: 0 2px 0 1px;
            }
            .tools { background: #ededed; border-bottom: 1px solid #8d8d8d; padding-top: 1px; }
            main { flex: 1; display: flex; min-height: 0; background: #ababab; }
            .desk { flex: 1; display: grid; grid-template-columns: 143fr 938fr 142fr; }
            note-page { grid-column: 2; }
            /* the docked drawer that peeks out over the left edge */
            .drawer {
                position: absolute;
                left: 0;
                top: 11px;
                width: 16px;
                height: 89px;
                border-radius: 6px 0 0 4px;
                background: linear-gradient(90deg, #eef2f4 3px, #333 4px, #777 5px, rgba(140, 140, 140, .5) 8px, rgba(220, 220, 220, 0));
            }
            recorder-panel { position: absolute; right: -1px; bottom: 0; }
        </style>
        <window-title>Untitled * - SMART Notebook</window-title>
        <menu-bar items="File,Edit,View,Insert,Format,Math,Draw,Help"></menu-bar>
        <div class="tools">
            <tool-row active="pen" tools="back forward addPage | open save | paste capture | undo redo remove | shade fullScreen transparent dual camera docCamera | table | select pen eraser line shapes magicPen fill text gallery compass move recorder"></tool-row>
            <tool-row tools="sum polygon hexagon compass tableSum graph puzzle |"></tool-row>
        </div>
        <main>
            <side-tabs></side-tabs>
            <page-scroll></page-scroll>
            <div class="desk"><note-page></note-page></div>
        </main>
        <task-bar></task-bar>
        <div class="drawer"></div>
        <recorder-panel></recorder-panel>
        `;
    }
}
customElements.define('notebook-app', NotebookApp);
</script>
</body>
</html>
